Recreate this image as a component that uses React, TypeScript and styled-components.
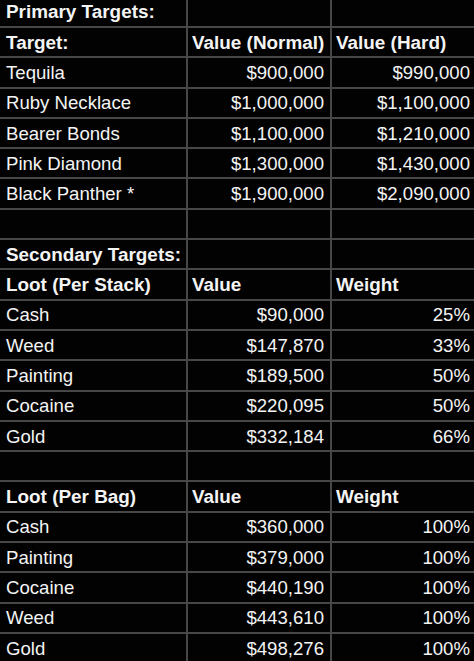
import styled, { createGlobalStyle } from "styled-components";

type Kind = "title" | "head" | "item" | "blank";

interface IRow {
  kind: Kind;
  cells: string[];
}

const GlobalStyle = createGlobalStyle`
  html, body {
    margin: 0;
    padding: 0;
    background: #020202;
  }
  body {
    font-family: "Liberation Sans", Arial, Helvetica, sans-serif;
    color: #f4f4f4;
    overflow: hidden;
  }
`;

const Sheet = styled.div`
  width: 474px;
  margin-top: -2.3px;
  background: #020202;
`;

const Row = styled.div`
  display: grid;
  grid-template-columns: 186px 144px 1fr;
  height: 30.3px;
  box-sizing: border-box;
  border-bottom: 2px solid #474747;
`;

const Cell = styled.div<{ $bold?: boolean; $right?: boolean }>`
  display: flex;
  align-items: center;
  justify-content: ${(p) => (p.$right ? "flex-end" : "flex-start")};
  padding: 1px 6px 0 6px;
  font-size: ${(p) => (p.$bold ? "18.9px" : "18.6px")};
  font-weight: ${(p) => (p.$bold ? 700 : 400)};
  white-space: nowrap;

  & + & {
    border-left: 2px solid #474747;
    padding-left: 4px;
  }

  &:last-child {
    padding-right: 4px;
  }
`;

const rows: IRow[] = [
  { kind: "title", cells: ["Primary Targets:", "", ""] },
  { kind: "head", cells: ["Target:", "Value (Normal)", "Value (Hard)"] },
  { kind: "item", cells: ["Tequila", "$900,000", "$990,000"] },
  { kind: "item", cells: ["Ruby Necklace", "$1,000,000", "$1,100,000"] },
  { kind: "item", cells: ["Bearer Bonds", "$1,100,000", "$1,210,000"] },
  { kind: "item", cells: ["Pink Diamond", "$1,300,000", "$1,430,000"] },
  { kind: "item", cells: ["Black Panther *", "$1,900,000", "$2,090,000"] },
  { kind: "blank", cells: ["", "", ""] },
  { kind: "title", cells: ["Secondary Targets:", "", ""] },
  { kind: "head", cells: ["Loot (Per Stack)", "Value", "Weight"] },
  { kind: "item", cells: ["Cash", "$90,000", "25%"] },
  { kind: "item", cells: ["Weed", "$147,870", "33%"] },
  { kind: "item", cells: ["Painting", "$189,500", "50%"] },
  { kind: "item", cells: ["Cocaine", "$220,095", "50%"] },
  { kind: "item", cells: ["Gold", "$332,184", "66%"] },
  { kind: "blank", cells: ["", "", ""] },
  { kind: "head", cells: ["Loot (Per Bag)", "Value", "Weight"] },
  { kind: "item", cells: ["Cash", "$360,000", "100%"] },
  { kind: "item", cells: ["Painting", "$379,000", "100%"] },
  { kind: "item", cells: ["Cocaine", "$440,190", "100%"] },
  { kind: "item", cells: ["Weed", "$443,610", "100%"] },
  { kind: "item", cells: ["Gold", "$498,276", "100%"] },
];

function App() {
  return (
    <>
      <GlobalStyle />
      <Sheet>
        {rows.map((row, i) => (
          <Row key={i}>
            {row.cells.map((text, j) => (
              <Cell
                key={j}
                $bold={row.kind === "title" || row.kind === "head"}
                $right={row.kind === "item" && j > 0}
              >
                {text}
              </Cell>
            ))}
          </Row>
        ))}
      </Sheet>
    </>
  );
}

export default App;
